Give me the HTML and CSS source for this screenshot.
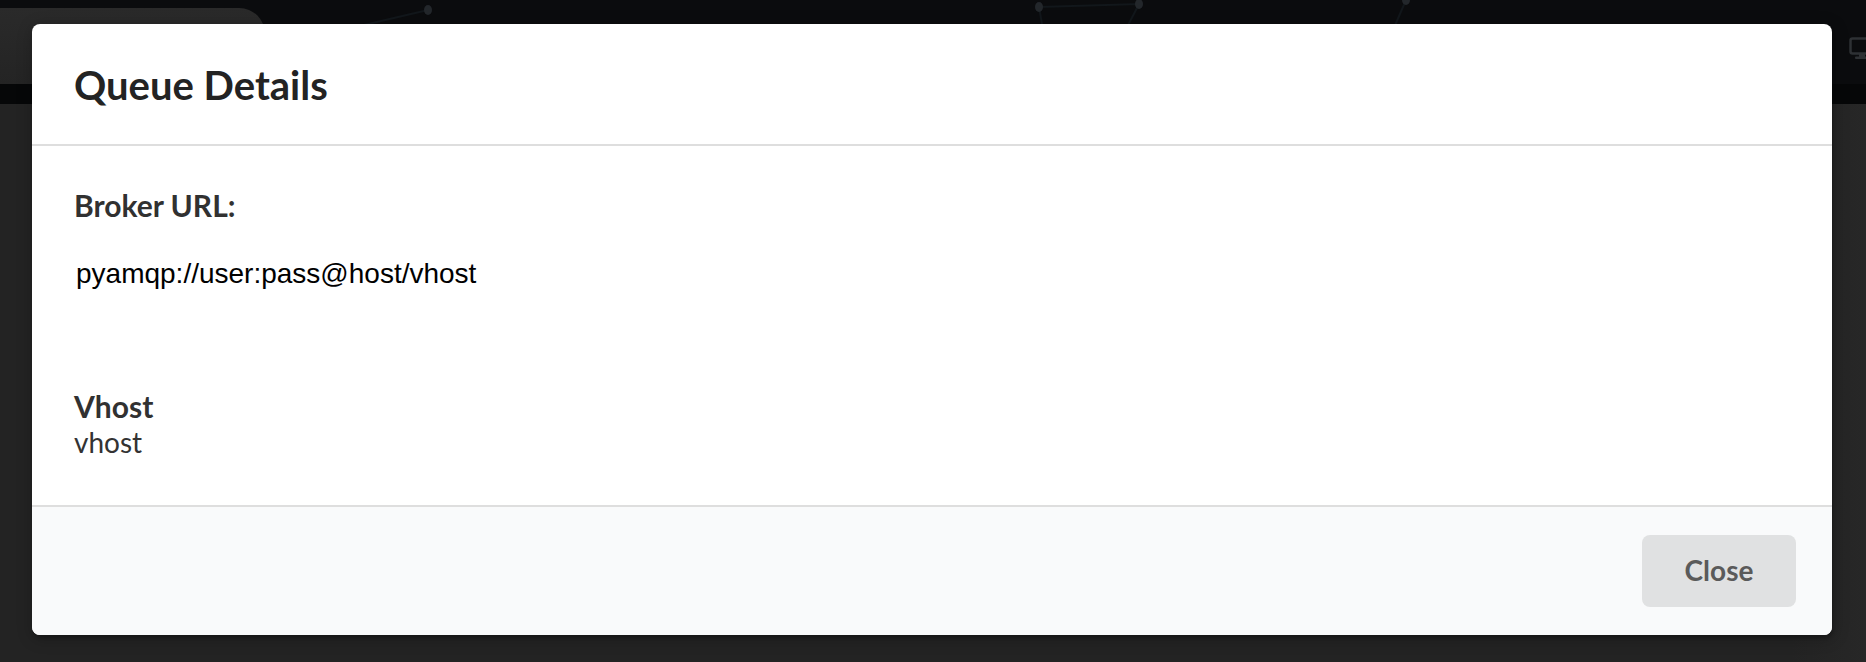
FILE: index.html
```html
<!DOCTYPE html>
<html lang="en">
<head>
<meta charset="utf-8">
<title>Queue Details</title>
<link rel="stylesheet" href="styles.css">
</head>
<body>
<div class="app">
  <div class="topbar">
    <svg class="net" width="1866" height="84" viewBox="0 0 1866 84" aria-hidden="true">
      <g stroke="#12171b" stroke-width="2" fill="none">
        <path d="M300 40 L428 10"/>
        <path d="M1039 7 L1139 4 L1110 60"/>
        <path d="M1039 7 L1050 70"/>
        <path d="M1406 0 L1380 60"/>
      </g>
      <g fill="#23272b">
        <ellipse cx="428" cy="10" rx="4" ry="5"/>
        <ellipse cx="1039" cy="7" rx="4" ry="5"/>
        <ellipse cx="1139" cy="4" rx="4" ry="5"/>
        <ellipse cx="1406" cy="0" rx="4" ry="5"/>
      </g>
    </svg>
    <div class="tab"></div>
    <div class="spacer"></div>
    <svg class="monitor" width="26" height="22" viewBox="0 0 26 22" aria-hidden="true">
      <rect x="1.5" y="1.5" width="23" height="15" rx="2" fill="none" stroke="#2e3134" stroke-width="2.5"/>
      <rect x="10" y="17" width="6" height="3" fill="#2e3134"/>
      <rect x="6" y="19.5" width="14" height="2.5" rx="1" fill="#2e3134"/>
    </svg>
  </div>
  <div class="strip"></div>
  <div class="main"></div>
</div>

<div class="modal">
  <div class="modal-header">
    <h1 class="modal-title">Queue Details</h1>
  </div>
  <div class="modal-content">
    <div class="field-label">Broker URL:</div>
    <div class="field-url">pyamqp://user:pass@host/vhost</div>
    <div class="field-label field-label-spaced">Vhost</div>
    <div class="field-value">vhost</div>
  </div>
  <div class="modal-actions">
    <button class="btn" type="button">Close</button>
  </div>
</div>
</body>
</html>
```

FILE: styles.css
```css
html, body {
  margin: 0;
  padding: 0;
}

body {
  width: 1866px;
  height: 662px;
  overflow: hidden;
  position: relative;
  background: #232323;
  font-family: "Lato", "Liberation Sans", sans-serif;
}

.app {
  display: flex;
  flex-direction: column;
  height: 662px;
}

.topbar {
  position: relative;
  height: 84px;
  background: #0b0c0e;
  display: flex;
  align-items: flex-end;
}

.net {
  position: absolute;
  left: 0;
  top: 0;
}

.tab {
  position: relative;
  width: 265px;
  height: 76px;
  background: linear-gradient(180deg, #2a2a2a 0%, #242424 100%);
  border-top-right-radius: 26px;
}

.spacer {
  flex: 1;
}

.monitor {
  position: relative;
  align-self: flex-start;
  margin-top: 37px;
  margin-right: -9px;
}

.strip {
  height: 20px;
  background: #060708;
}

.main {
  flex: 1;
  background: linear-gradient(90deg, #232323 0%, #232323 96%, #272727 100%);
}

.modal {
  position: absolute;
  left: 32px;
  top: 24px;
  width: 1800px;
  background: #ffffff;
  border-radius: 8px;
  overflow: hidden;
  box-shadow: 1px 3px 3px 0 rgba(0, 0, 0, 0.2), 1px 3px 15px 2px rgba(0, 0, 0, 0.2);
}

.modal-header {
  padding: 36px 42px 34px;
  border-bottom: 2px solid #dedede;
}

.modal-title {
  margin: 0;
  font-family: "Lato", sans-serif;
  font-weight: 700;
  font-size: 40px;
  line-height: 50px;
  color: #232323;
}

.modal-content {
  padding: 41px 42px 46px;
}

.field-label {
  font-family: "Lato", sans-serif;
  font-weight: 700;
  font-size: 30px;
  line-height: 36px;
  color: #313131;
}

.field-label-spaced {
  margin-top: 98px;
}

.field-url {
  margin-top: 35px;
  padding-left: 2px;
  font-family: "Liberation Sans", Arial, sans-serif;
  font-size: 28px;
  line-height: 32px;
  color: #000000;
}

.field-value {
  margin-top: 1px;
  font-family: "Lato", sans-serif;
  font-weight: 400;
  font-size: 28px;
  line-height: 34px;
  color: #333333;
}

.modal-actions {
  display: flex;
  justify-content: flex-end;
  padding: 28px 36px 28px;
  background: #f9fafb;
  border-top: 2px solid #dedede;
}

.btn {
  height: 72px;
  width: 154px;
  padding: 0 0 3px;
  border: none;
  border-radius: 8px;
  background: #e0e1e2;
  color: #5a5a5a;
  font-family: "Lato", sans-serif;
  font-weight: 700;
  font-size: 28px;
  line-height: 66px;
  cursor: pointer;
}
```
